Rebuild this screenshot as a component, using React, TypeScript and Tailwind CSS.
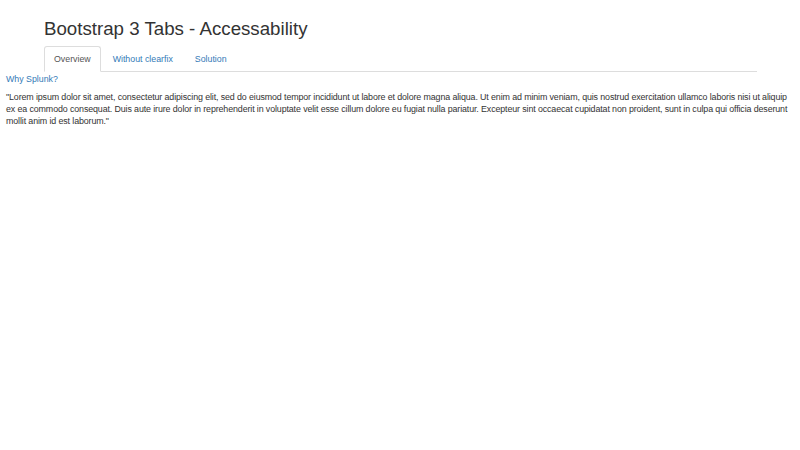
export default function App() {
	const tabs = ["Overview", "Without clearfix", "Solution"];

	return (
		<div className="min-h-[450px] bg-white text-[#333] font-['Liberation_Sans',Arial,sans-serif]">
			{/* Container */}
			<div className="ml-[44px] w-[713px] pt-[18px]">
				<h1 className="text-[18.7px] leading-[22px] font-normal">Bootstrap 3 Tabs - Accessability</h1>
				{/* Tabs */}
				<ul className="flex mt-[6px] border-b border-[#ddd]">
					{tabs.map((tab, i) => (
						<li key={tab} className="mr-[2px] -mb-px">
							<a
								href="#"
								className={
									i === 0
										? "block px-[9px] h-[26px] leading-[24px] text-[8.8px] text-[#555] bg-white border border-[#ddd] border-b-white rounded-t-[3px]"
										: "block px-[9px] h-[26px] leading-[24px] text-[8.8px] text-[#337ab7] border border-transparent"
								}
							>
								{tab}
							</a>
						</li>
					))}
				</ul>
			</div>
			<div className="pl-[6px] pr-[4px]">
				<a href="#" className="block mt-[1px] text-[8.8px] leading-[12px] text-[#337ab7]">Why Splunk?</a>
				<p className="mt-[6px] text-[8.9px] tracking-[-0.12px] leading-[12px]">
					"Lorem ipsum dolor sit amet, consectetur adipiscing elit, sed do eiusmod tempor incididunt ut labore et dolore magna aliqua. Ut enim ad minim veniam, quis nostrud exercitation ullamco laboris nisi ut aliquip ex ea commodo consequat. Duis aute irure dolor in reprehenderit in voluptate velit esse cillum dolore eu fugiat nulla pariatur. Excepteur sint occaecat cupidatat non proident, sunt in culpa qui officia deserunt mollit anim id est laborum."
				</p>
			</div>
		</div>
	);
}
